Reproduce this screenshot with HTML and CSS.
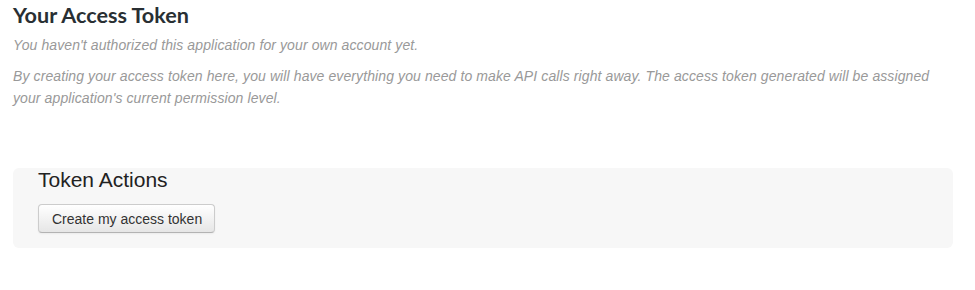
FILE: index.html
```html
<!DOCTYPE html>
<html lang="en">

<head>
    <meta charset="UTF-8">
    <meta name="viewport" content="width=device-width, initial-scale=1.0">
    <title>Your Access Token</title>
    <link rel="stylesheet" href="styles.css">
</head>

<body>
    <div class="page">
        <!-- Access token intro -->
        <h2 class="title">Your Access Token</h2>
        <p class="note">You haven't authorized this application for your own account yet.</p>
        <p class="note">By creating your access token here, you will have everything you need to make API calls right away. The access token generated will be assigned your application's current permission level.</p>

        <!-- Actions -->
        <div class="well">
            <h3>Token Actions</h3>
            <button class="btn">Create my access token</button>
        </div>
    </div>
</body>

</html>
```

FILE: styles.css
```css
body {
    font-family: "Liberation Sans", Arial, sans-serif;
    font-size: 14px;
    color: #333;
    background-color: #fff;
    margin: 0;
}

.page {
    padding: 0 22px 0 13px;
}

.title {
    font-family: Lato, sans-serif;
    font-weight: 700;
    font-size: 21.6px;
    line-height: 30px;
    color: #292f33;
    margin: 0 0 4px;
}

.note {
    font-style: italic;
    color: #999;
    line-height: 22px;
    letter-spacing: 0.1px;
    margin: 0 0 9px;
    padding-right: 15px;
}

.well {
    background-color: #f7f7f7;
    border-radius: 6px;
    margin-top: 59px;
    padding: 0 25px 15px;
}

.well h3 {
    font-size: 21px;
    font-weight: normal;
    line-height: 24px;
    color: #222;
    margin: 0;
}

.btn {
    display: block;
    font-family: "Liberation Sans", Arial, sans-serif;
    font-size: 14px;
    color: #333;
    margin-top: 12px;
    padding: 0 12px 0 13px;
    height: 29px;
    border: 1px solid #ccc;
    border-bottom-color: #b3b3b3;
    border-radius: 4px;
    background-image: linear-gradient(to bottom, #ffffff, #e6e6e6);
    box-shadow: inset 0 1px 0 rgba(255, 255, 255, 0.2), 0 1px 2px rgba(0, 0, 0, 0.05);
    cursor: pointer;
}
```
